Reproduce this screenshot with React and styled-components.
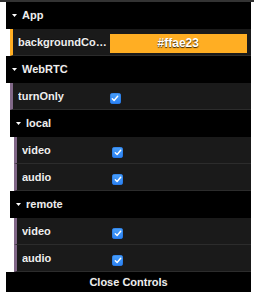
import React from "react";
import styled, { createGlobalStyle } from "styled-components";

const GlobalStyle = createGlobalStyle`
  html, body {
    margin: 0;
    padding: 0;
    background: #ffffff;
  }
`;

const TopStrip = styled.div`
  height: 2px;
  background: #333333;
`;

const Panel = styled.div`
  margin-left: 6px;
  width: 245px;
  font-family: "Liberation Sans", Arial, sans-serif;
  font-weight: bold;
  font-size: 11px;
  color: #eeeeee;
  text-shadow: 0 -1px 0 #111111;
`;

const FolderBody = styled.div`
  padding-left: 4px;
  background: #ffffff;
`;

const Title = styled.div`
  display: flex;
  align-items: center;
  height: 26px;
  line-height: 26px;
  padding-left: 6px;
  background: #000000;
  border-bottom: 1px solid #000000;
`;

const Arrow = styled.svg`
  width: 5px;
  height: 3px;
  margin-right: 5px;
  margin-top: 1px;
  flex-shrink: 0;
`;

const Row = styled.div`
  display: flex;
  height: 26px;
  line-height: 26px;
  padding: 0 4px 0 5px;
  background: #1a1a1a;
  border-bottom: 1px solid #2c2c2c;
  border-left: 3px solid ${(props) => props.$stripe};
`;

const PropertyName = styled.span`
  width: 40%;
  overflow: hidden;
  white-space: nowrap;
  text-overflow: ellipsis;
`;

const Control = styled.div`
  width: 60%;
  display: flex;
  align-items: flex-start;
`;

const ColorInput = styled.div`
  width: 100%;
  height: 19px;
  margin-top: 5px;
  line-height: 19px;
  font-size: 12px;
  text-align: center;
  background: ${(props) => props.$color};
  color: #ffffff;
  text-shadow: rgba(0, 0, 0, 0.8) 0 1px 1px;
`;

const Checkbox = styled.span`
  width: 11px;
  height: 11px;
  margin-top: 10px;
  border-radius: 3px;
  background: linear-gradient(#4aa0fa, #2a80f2);
  box-shadow: inset 0 0 0 0.5px #2372dd;
  display: flex;
  align-items: center;
  justify-content: center;
`;

const CloseButton = styled.div`
  height: 20px;
  line-height: 20px;
  text-align: center;
  background: #000000;
`;

const Check = () => (
  <svg width="8" height="7" viewBox="0 0 8 7">
    <path d="M1.3 3.8 L3.1 5.5 L6.7 1.2" fill="none" stroke="#ffffff" strokeWidth="1.4" strokeLinecap="round" strokeLinejoin="round" />
  </svg>
);

const Folder = ({ name, children }) => (
  <div>
    <Title>
      <Arrow viewBox="0 0 5 3">
        <polygon points="0,0 5,0 2.5,3" fill="#ffffff" />
      </Arrow>
      {name}
    </Title>
    <FolderBody>{children}</FolderBody>
  </div>
);

const BoolRow = ({ name }) => (
  <Row $stripe="#806787">
    <PropertyName>{name}</PropertyName>
    <Control>
      <Checkbox>
        <Check />
      </Checkbox>
    </Control>
  </Row>
);

const App = () => {
  const bg = "#ffae23";
  return (
    <>
      <GlobalStyle />
      <TopStrip />
      <Panel>
        <Folder name="App">
          <Row $stripe={bg}>
            <PropertyName>backgroundColor</PropertyName>
            <Control>
              <ColorInput $color={bg}>{bg}</ColorInput>
            </Control>
          </Row>
        </Folder>
        <Folder name="WebRTC">
          <BoolRow name="turnOnly" />
          <Folder name="local">
            <BoolRow name="video" />
            <BoolRow name="audio" />
          </Folder>
          <Folder name="remote">
            <BoolRow name="video" />
            <BoolRow name="audio" />
          </Folder>
        </Folder>
        <CloseButton>Close Controls</CloseButton>
      </Panel>
    </>
  );
};

export default App;
